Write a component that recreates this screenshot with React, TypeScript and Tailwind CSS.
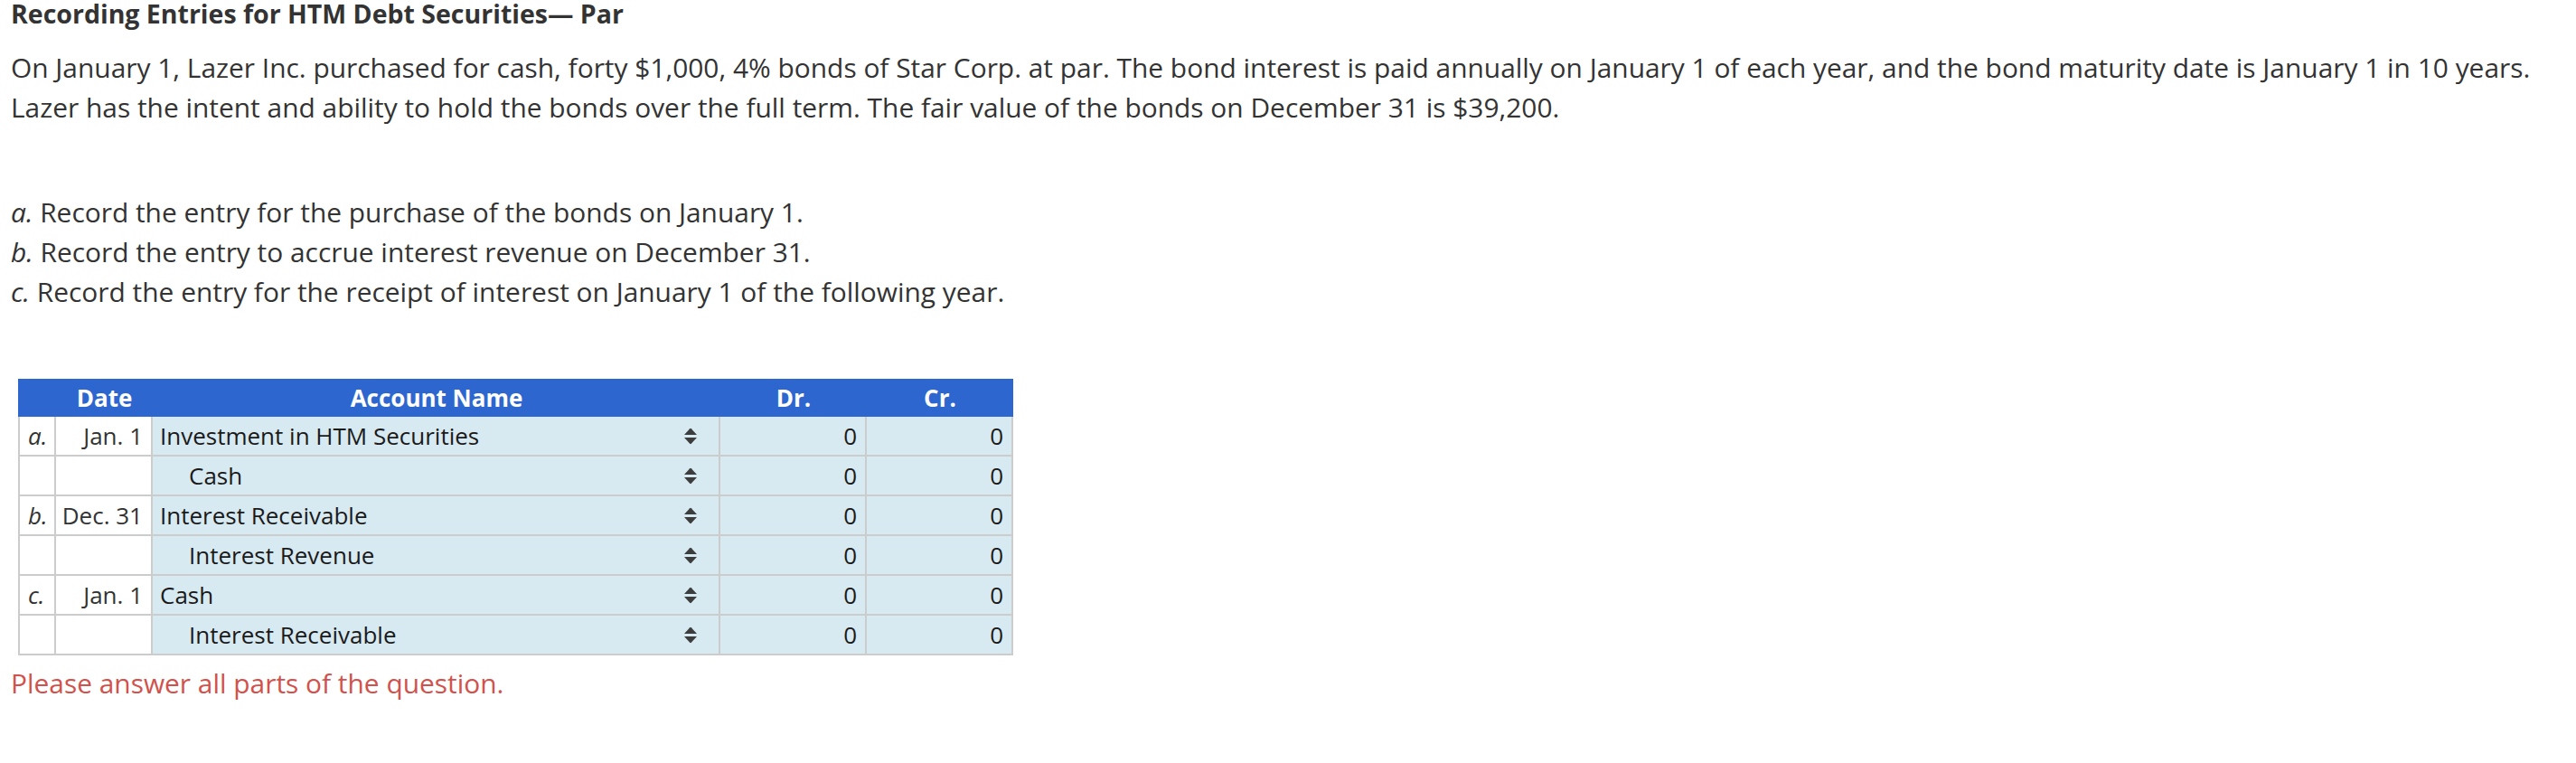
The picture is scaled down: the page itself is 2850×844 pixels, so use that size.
import React from "react";

const font = { fontFamily: '"Open Sans", "Liberation Sans", Arial, sans-serif' };

function SelectArrows() {
  return (
    <svg width="16" height="19" viewBox="0 0 16 19" className="shrink-0">
      <path d="M1 8 L7.2 1.2 Q8 0.4 8.8 1.2 L15 8 Z" fill="#3d3d3d" />
      <path d="M1 11 L15 11 L8.8 17.8 Q8 18.6 7.2 17.8 Z" fill="#3d3d3d" />
    </svg>
  );
}

type Row = { label: string; date: string; account: string; credit: boolean };

const rows: Row[] = [
  { label: "a.", date: "Jan. 1", account: "Investment in HTM Securities", credit: false },
  { label: "", date: "", account: "Cash", credit: true },
  { label: "b.", date: "Dec. 31", account: "Interest Receivable", credit: false },
  { label: "", date: "", account: "Interest Revenue", credit: true },
  { label: "c.", date: "Jan. 1", account: "Cash", credit: false },
  { label: "", date: "", account: "Interest Receivable", credit: true },
];

export default function App() {
  return (
    <div className="bg-white min-h-[844px] w-full pl-[12px] pr-[12px] text-[#333]" style={font}>
      <h1 className="m-0 text-[28.5px] font-bold leading-[31px] text-[#333]">
        Recording Entries for HTM Debt Securities— Par
      </h1>
      <p className="m-0 mt-[22px] text-[29.9px] leading-[43.5px]">
        On January 1, Lazer Inc. purchased for cash, forty $1,000, 4% bonds of Star Corp. at par. The bond interest is paid annually on January 1 of each year, and the bond maturity date is January 1 in 10 years. Lazer has the intent and ability to hold the bonds over the full term. The fair value of the bonds on December 31 is $39,200.
      </p>
      <div className="mt-[73px] text-[29.9px] leading-[44px]">
        <div>
          <i>a.</i> Record the entry for the purchase of the bonds on January 1.
        </div>
        <div>
          <i>b.</i> Record the entry to accrue interest revenue on December 31.
        </div>
        <div>
          <i>c.</i> Record the entry for the receipt of interest on January 1 of the following year.
        </div>
      </div>

      <div className="mt-[74px] ml-[8px] w-[1101px] text-[26px]">
        <div className="grid h-[42px] grid-cols-[42px_107px_628px_162px_162px] items-center bg-[#2e66d0] font-bold text-white leading-[42px]">
          <div></div>
          <div className="text-center">Date</div>
          <div className="text-center">Account Name</div>
          <div className="text-center">Dr.</div>
          <div className="text-center">Cr.</div>
        </div>
        {rows.map((r, i) => (
          <div
            key={i}
            className="grid h-[44px] grid-cols-[40px_107px_628px_162px_162px] border-l-2 border-[#cccccc]"
          >
            <div className="flex items-center border-r-2 border-b-2 border-[#cccccc] bg-white pl-[9px] italic text-[#333]">
              {r.label}
            </div>
            <div className="flex items-center justify-end border-r-2 border-b-2 border-[#cccccc] bg-white pr-[9px] text-[#333] whitespace-nowrap">
              {r.date}
            </div>
            <div
              className={
                r.credit
                  ? "flex items-center justify-between border-r-2 border-b-2 border-[#cccccc] bg-[#d7e9f1] pl-[40px] pr-[23px] text-[#1a1a1a] whitespace-nowrap"
                  : "flex items-center justify-between border-r-2 border-b-2 border-[#cccccc] bg-[#d7e9f1] pl-[8px] pr-[23px] text-[#1a1a1a] whitespace-nowrap"
              }
            >
              <span>{r.account}</span>
              <SelectArrows />
            </div>
            <div className="flex items-center justify-end border-r-2 border-b-2 border-[#cccccc] bg-[#d7e9f1] pr-[9px] text-[#1a1a1a]">
              0
            </div>
            <div className="flex items-center justify-end border-r-2 border-b-2 border-[#cccccc] bg-[#d7e9f1] pr-[9px] text-[#1a1a1a]">
              0
            </div>
          </div>
        ))}
      </div>

      <p className="m-0 mt-[11px] text-[29.9px] leading-[40px] text-[#d1524c]">
        Please answer all parts of the question.
      </p>
    </div>
  );
}
